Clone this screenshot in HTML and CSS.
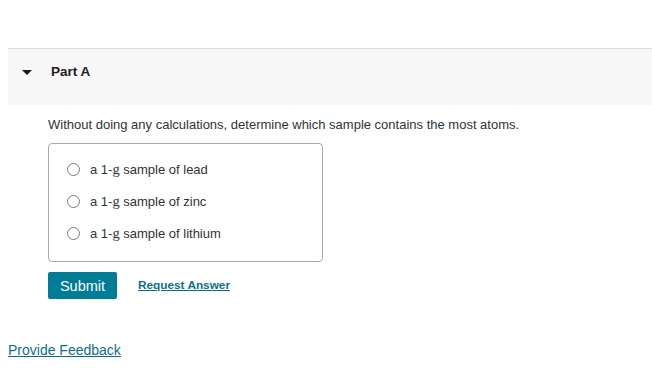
FILE: index.html
```html
<!DOCTYPE html>
<html>
<head>
<meta charset="utf-8">
<link rel="stylesheet" href="styles.css">
</head>
<body>
<div class="page">
  <div class="part-header">
    <span class="caret"></span>
    <span class="part-title">Part A</span>
  </div>
  <div class="part-body">
    <p class="question">Without doing any calculations, determine which sample contains the most atoms.</p>
    <div class="choices">
      <label class="choice"><span class="radio"></span><span class="label">a 1-<span class="var">g</span> sample of lead</span></label>
      <label class="choice"><span class="radio"></span><span class="label">a 1-<span class="var">g</span> sample of zinc</span></label>
      <label class="choice"><span class="radio"></span><span class="label">a 1-<span class="var">g</span> sample of lithium</span></label>
    </div>
    <div class="actions">
      <button class="submit">Submit</button>
      <a class="request" href="#">Request Answer</a>
    </div>
  </div>
  <a class="feedback" href="#">Provide Feedback</a>
</div>
</body>
</html>
```

FILE: styles.css
```css
html, body {
  margin: 0;
  padding: 0;
  background: #fff;
}
body {
  font-family: "Liberation Sans", Arial, sans-serif;
  color: #212121;
}
.page {
  padding: 48px 0 0 8px;
}
.part-header {
  height: 56px;
  border-top: 1px solid #dcdcdc;
  background: #f7f7f7;
  display: flex;
  align-items: flex-start;
  padding-left: 14px;
  box-sizing: content-box;
}
.caret {
  width: 0;
  height: 0;
  border-left: 5px solid transparent;
  border-right: 5px solid transparent;
  border-top: 5px solid #1a1a1a;
  margin-right: 19px;
  margin-top: 21px;
}
.part-title {
  font-weight: bold;
  font-size: 13.5px;
  line-height: 16px;
  margin-top: 15px;
  color: #212121;
}
.part-body {
  padding-left: 40px;
}
.question {
  margin: 12px 0 0 0;
  font-size: 13px;
  line-height: 15px;
  color: #333;
}
.choices {
  margin-top: 11px;
  width: 275px;
  height: 119px;
  border: 1px solid #a9a9a9;
  border-radius: 4px;
  box-sizing: border-box;
  padding: 15px 0 0 18px;
  display: flex;
  flex-direction: column;
  gap: 12px;
}
.choice {
  display: flex;
  align-items: center;
  height: 20px;
  font-size: 13px;
  color: #333;
}
.radio {
  width: 11px;
  height: 11px;
  border: 1px solid #7a7a7a;
  border-radius: 50%;
  margin-right: 10px;
  flex: none;
}
.var {
  font-family: "Liberation Serif", "Times New Roman", serif;
  font-size: 14.5px;
}
.actions {
  margin-top: 10px;
  display: flex;
  align-items: center;
}
.submit {
  width: 69px;
  height: 27px;
  background: #007c97;
  color: #fff;
  border: none;
  border-radius: 2px;
  font-family: "Liberation Sans", Arial, sans-serif;
  font-size: 14.5px;
  padding: 0;
}
.request {
  margin-left: 21px;
  font-size: 11.8px;
  font-weight: bold;
  color: #0a6f8c;
  text-decoration: underline;
  margin-top: -2px;
}
.feedback {
  display: inline-block;
  margin-top: 43px;
  font-size: 14px;
  color: #0a6f8c;
  text-decoration: underline;
}
```
